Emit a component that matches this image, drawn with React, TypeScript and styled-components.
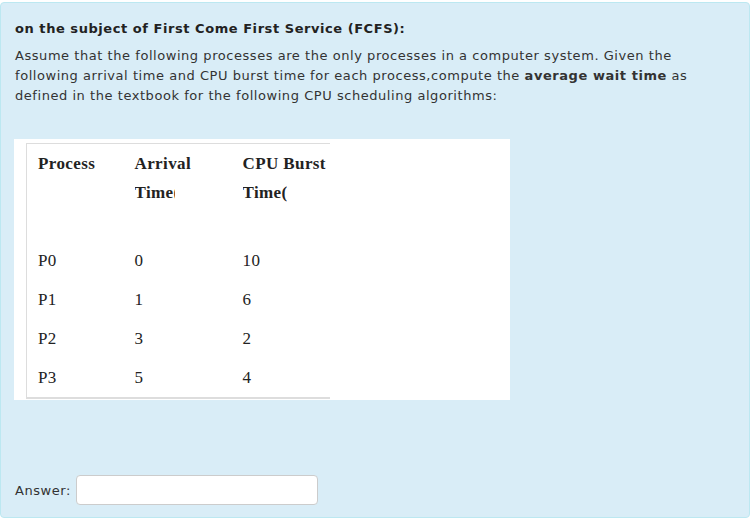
import React from "react";
import styled, { createGlobalStyle } from "styled-components";

const Global = createGlobalStyle`
  html, body { margin: 0; padding: 0; background: #ffffff; }
  body { font-family: Verdana, "DejaVu Sans", sans-serif; }
`;

const Panel = styled.div`
  box-sizing: border-box;
  margin: 2px 3px 0 0;
  height: 516px;
  background: #d9edf7;
  border: 1px solid #bce8f1;
  border-radius: 4px;
  padding: 16px 14px 0 14px;
  color: #333333;
  font-size: 13px;
  letter-spacing: 0.55px;
  display: flex;
  flex-direction: column;
`;

const Title = styled.div`
  font-weight: bold;
  line-height: 20px;
  color: #222222;
`;

const Body = styled.p`
  margin: 7px 0 0 0;
  line-height: 20px;
  white-space: nowrap;
  b { font-weight: bold; }
`;

const WhiteBox = styled.div`
  margin-top: 33px;
  margin-left: -1px;
  width: 496px;
  background: #ffffff;
  padding: 4px 0 1px 12px;
  box-sizing: border-box;
  letter-spacing: normal;
`;

const Table = styled.table`
  border-collapse: collapse;
  border-left: 1px solid #dddddd;
  border-top: 1px solid #dddddd;
  border-bottom: 2px solid #dddddd;
  font-family: "Liberation Serif", "Times New Roman", serif;
  font-size: 17px;
  letter-spacing: 0.4px;
  color: #222222;
`;

const HeadCell = styled.th<{ $w: number }>`
  width: ${(p) => p.$w}px;
  box-sizing: border-box;
  text-align: left;
  vertical-align: top;
  font-weight: bold;
  line-height: 29px;
  padding: 5px 0 34px 11px;
`;

const Cell = styled.td<{ $w: number }>`
  width: ${(p) => p.$w}px;
  box-sizing: border-box;
  text-align: left;
  line-height: 29px;
  padding: 5px 0 5px 11px;
  font-weight: normal;
`;

const Clip = styled.span<{ $w: number }>`
  display: block;
  width: ${(p) => p.$w}px;
  overflow: hidden;
  white-space: nowrap;
`;

const AnswerRow = styled.div`
  margin-top: auto;
  margin-bottom: 12px;
  display: flex;
  align-items: center;
  gap: 5px;
`;

const Input = styled.input`
  box-sizing: border-box;
  width: 242px;
  height: 30px;
  border: 1px solid #cccccc;
  border-radius: 4px;
  background: #ffffff;
  outline: none;
`;

const rows = [
  ["P0", "0", "10"],
  ["P1", "1", "6"],
  ["P2", "3", "2"],
  ["P3", "5", "4"],
];

const widths = [97, 108, 98];

export default function App() {
  return (
    <>
      <Global />
      <Panel>
        <Title>on the subject of First Come First Service (FCFS):</Title>
        <Body>
          Assume that the following processes are the only processes in a computer system. Given the
          <br />
          following arrival time and CPU burst time for each process,compute the <b>average wait time</b> as
          <br />
          defined in the textbook for the following CPU scheduling algorithms:
        </Body>
        <WhiteBox>
          <Table>
            <thead>
              <tr>
                <HeadCell $w={widths[0]}>Process</HeadCell>
                <HeadCell $w={widths[1]}>
                  Arrival
                  <Clip $w={40}>Time(ms)</Clip>
                </HeadCell>
                <HeadCell $w={widths[2]}>
                  CPU Burst
                  <Clip $w={44}>Time(ms)</Clip>
                </HeadCell>
              </tr>
            </thead>
            <tbody>
              {rows.map((r) => (
                <tr key={r[0]}>
                  {r.map((v, i) => (
                    <Cell key={i} $w={widths[i]}>
                      {v}
                    </Cell>
                  ))}
                </tr>
              ))}
            </tbody>
          </Table>
        </WhiteBox>
        <AnswerRow>
          <span>Answer:</span>
          <Input type="text" />
        </AnswerRow>
      </Panel>
    </>
  );
}
